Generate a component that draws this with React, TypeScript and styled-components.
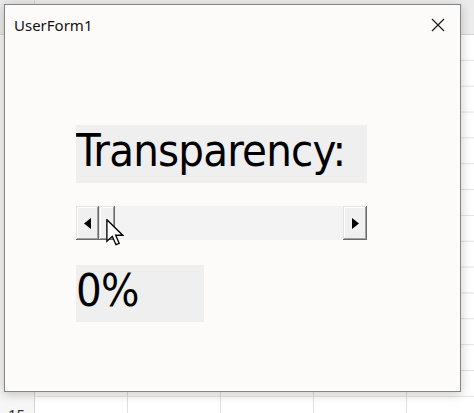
import React from 'react';
import styled, {createGlobalStyle} from "styled-components";

const GlobalStyle = createGlobalStyle`
  html, body {
    margin: 0;
    padding: 0;
    overflow: hidden;
    background: #ffffff;
  }
`;

const Sheet = styled.div`
  position: relative;
  width: 474px;
  height: 413px;
  display: grid;
  grid-template-columns: 35px 1fr;
  grid-template-rows: 35px 1fr;
  overflow: hidden;
  font-family: "Noto Sans", "Open Sans", sans-serif;
`;

const Corner = styled.div`
  background: #e9e9e9;
  border-right: 1px solid #d4d4d4;
  border-bottom: 1px solid #d4d4d4;
`;

const ColumnHeader = styled.div`
  background: #ececec;
  border-bottom: 1px solid #d4d4d4;
`;

const RowHeader = styled.div`
  background: #f6f6f6;
  border-right: 1px solid #d4d4d4;
  display: flex;
  flex-direction: column;
  justify-content: flex-end;
  align-items: flex-start;
`;

const RowLabel = styled.span`
  font-size: 15px;
  line-height: 16px;
  color: #333;
  padding-left: 8px;
  margin-bottom: -9px;
`;

const Cells = styled.div`
  background-color: #ffffff;
  background-image:
    linear-gradient(to right, transparent 92px, #e0e0e0 92px, #e0e0e0 93px, transparent 93px),
    linear-gradient(to bottom, transparent 24.85px, #e2e2e2 24.85px, #e2e2e2 25.85px, transparent 25.85px);
  background-size: 93px 100%, 100% 25.85px;
`;

const Window = styled.div`
  position: absolute;
  left: 4px;
  top: 4px;
  width: 457px;
  height: 388px;
  box-sizing: border-box;
  border: 1px solid #858585;
  background: #fcfbfa;
  box-shadow: 0 2px 10px rgba(0, 0, 0, 0.22);
  display: flex;
  flex-direction: column;
`;

const TitleBar = styled.div`
  height: 40px;
  display: flex;
  align-items: center;
  justify-content: space-between;
  padding: 0 15px 0 9px;
`;

const Title = styled.span`
  font-family: "Noto Sans", "Open Sans", sans-serif;
  font-size: 15px;
  color: #111;
`;

const CloseIcon = styled.svg`
  width: 14px;
  height: 14px;
  display: block;
`;

const Body = styled.div`
  display: flex;
  flex-direction: column;
  padding: 80px 0 0 71px;
`;

const Label = styled.div<{width: number; height: number}>`
  width: ${p => p.width}px;
  height: ${p => p.height}px;
  background: #efefef;
  font-family: "DejaVu Sans Condensed", "DejaVu Sans", sans-serif;
  font-size: 45px;
  line-height: ${p => p.height - 6}px;
  letter-spacing: -0.8px;
  color: #000;
  white-space: nowrap;
  overflow: hidden;
`;

const ScrollBar = styled.div`
  position: relative;
  width: 291px;
  height: 34px;
  margin: 23px 0 25px;
  background: #f3f3f3;
  display: flex;
  align-items: stretch;
`;

const ScrollButton = styled.div<{width: number}>`
  width: ${p => p.width}px;
  background: #f0f0f0;
  box-shadow:
    inset -1px -1px #6a6a6a,
    inset 1px 1px #e3e3e3,
    inset -2px -2px #a0a0a0,
    inset 2px 2px #ffffff;
  display: flex;
  align-items: center;
  justify-content: center;
`;

const Track = styled.div`
  flex: 1;
`;

const Arrow = styled.svg`
  width: 7px;
  height: 11px;
  display: block;
`;

const Cursor = styled.svg`
  position: absolute;
  left: 30px;
  top: 13px;
  width: 18px;
  height: 27px;
`;

function App() {
  return (
    <>
      <GlobalStyle/>
      <Sheet>
        <Corner/>
        <ColumnHeader/>
        <RowHeader>
          <RowLabel>15</RowLabel>
        </RowHeader>
        <Cells/>
        <Window>
          <TitleBar>
            <Title>UserForm1</Title>
            <CloseIcon viewBox="0 0 14 14">
              <path d="M1 1 L13 13 M13 1 L1 13" stroke="#1a1a1a" strokeWidth="1.2" fill="none"/>
            </CloseIcon>
          </TitleBar>
          <Body>
            <Label width={291} height={58}>Transparency:</Label>
            <ScrollBar>
              <ScrollButton width={23}>
                <Arrow viewBox="0 0 7 11"><path d="M7 0 L0 5.5 L7 11 Z" fill="#000"/></Arrow>
              </ScrollButton>
              <ScrollButton width={16}/>
              <Track/>
              <ScrollButton width={24}>
                <Arrow viewBox="0 0 7 11"><path d="M0 0 L7 5.5 L0 11 Z" fill="#000"/></Arrow>
              </ScrollButton>
              <Cursor viewBox="0 0 13 20">
                <path d="M0.5 0.5 L0.5 16.5 L4.5 12.8 L7.2 19 L9.6 18 L7 12 L12.2 12 Z"
                      fill="#fff" stroke="#000" strokeWidth="1" strokeLinejoin="miter"/>
              </Cursor>
            </ScrollBar>
            <Label width={128} height={57}>0%</Label>
          </Body>
        </Window>
      </Sheet>
    </>
  );
}

export default App;
